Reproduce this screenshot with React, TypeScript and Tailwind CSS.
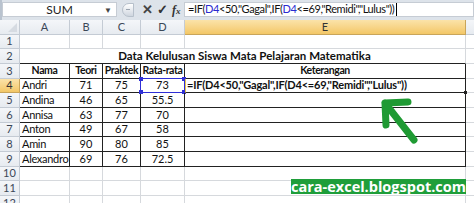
import React from 'react';

const cols = ['A', 'B', 'C', 'D', 'E'];

const rows: (string | number)[][] = [
  ['Andri', 71, 75, 73],
  ['Andina', 46, 65, 55.5],
  ['Annisa', 63, 77, 70],
  ['Anton', 49, 67, 58],
  ['Amin', 90, 80, 85],
  ['Alexandro', 69, 76, 72.5],
];

const formula = (
  <>
    =IF(<span className="text-[#2b2bd0]">D4</span>&lt;50,"Gagal",IF(
    <span className="text-[#2b2bd0]">D4</span>&lt;=69,"Remidi","Lulus"))
  </>
);

const cellFormula = <>=IF(D4&lt;50,"Gagal",IF(D4&lt;=69,"Remidi","Lulus"))</>;

const grid = 'border-r border-b border-[#d6d9dd]';
const dark = 'border-r border-b border-[#222]';

function RowHead({ n, active }: { n: number; active?: boolean }) {
  return (
    <div
      className={`flex items-center justify-center border-r border-b text-[11px] ${
        active
          ? 'bg-gradient-to-b from-[#fbe3a9] to-[#f3c766] border-[#c9a55a] text-[#333]'
          : 'bg-gradient-to-b from-[#f4f6f9] to-[#e7ebf0] border-[#c4cbd4] text-[#3b4757]'
      }`}
    >
      {n}
    </div>
  );
}

export default function App() {
  return (
    <div className="w-[474px] h-[203px] overflow-hidden bg-white relative" style={{ fontFamily: 'Lato, "Liberation Sans", sans-serif' }}>
      {/* formula bar */}
      <div className="flex h-[20px] bg-[#dde3ea] pt-[2px] pb-[3px] border-l-2 border-[#b9c3cf]">
        <div className="w-[115px] bg-white flex items-center border border-[#c6ccd4] text-[12px] text-[#222]">
          <span className="flex-1 text-center pl-[12px]">SUM</span>
          <span className="text-[8px] pr-[4px] text-[#444]">▼</span>
        </div>
        <div className="w-[67px] flex items-center text-[#333]">
          <div className="w-[12px] h-[14px] ml-[5px] rounded-l-full bg-gradient-to-b from-[#ffffff] to-[#cfd6df] border border-[#b7c0cb] flex items-center justify-center">
            <span className="block w-[4px] h-[1px] bg-[#9aa4b0]" />
          </div>
          <span className="ml-[8px] text-[13px] font-bold leading-none text-[#444]">✕</span>
          <span className="ml-[4px] text-[13px] font-bold leading-none text-[#333]">✓</span>
          <span className="ml-[4px] text-[12px] italic font-bold leading-none text-[#333]" style={{ fontFamily: '"Liberation Serif", serif' }}>
            f<span className="text-[9px]">x</span>
          </span>
        </div>
        <div className="flex-1 bg-white border border-[#c6ccd4] flex items-center pl-[3px] text-[11px] tracking-[-0.4px] text-[#111] whitespace-nowrap">
          {formula}
          <span className="inline-block w-[1px] h-[13px] bg-black ml-[2px]" />
        </div>
      </div>

      {/* sheet */}
      <div className="grid grid-cols-[20px_50px_33px_38px_44px_281px_8px] grid-rows-[15px_14px_15px_15px_14px_15px_15px_14px_15px_15px_14px_15px_15px] text-[11px] text-[#111]">
        {/* header row */}
        <div className="relative bg-gradient-to-b from-[#f4f6f9] to-[#e7ebf0] border-r border-b border-[#c4cbd4]">
          <span className="absolute right-[2px] bottom-[2px] w-0 h-0 border-l-[9px] border-l-transparent border-b-[9px] border-b-[#d6dbe2]" />
        </div>
        {cols.map(c => (
          <div
            key={c}
            className={`flex items-center justify-center border-r border-b text-[11px] ${
              c === 'E'
                ? 'bg-gradient-to-b from-[#fbe3a9] to-[#f3c766] border-[#c9a55a] text-[#333]'
                : 'bg-gradient-to-b from-[#f4f6f9] to-[#e7ebf0] border-[#c4cbd4] text-[#3b4757]'
            }`}
          >
            {c}
          </div>
        ))}
        <div className="bg-gradient-to-b from-[#f4f6f9] to-[#e7ebf0] border-b border-[#c4cbd4]" />

        {/* row 1 */}
        <RowHead n={1} />
        {cols.map(c => (
          <div key={c} className={grid} />
        ))}
        <div className="border-b border-[#d6d9dd]" />

        {/* row 2 */}
        <RowHead n={2} />
        <div className="col-span-5 flex items-center justify-center font-bold text-[11.5px] border-b border-r border-b-[#222] border-r-[#d6d9dd] pl-[4px]">
          Data Kelulusan Siswa Mata Pelajaran Matematika
        </div>
        <div className="border-b border-[#d6d9dd]" />

        {/* row 3 */}
        <RowHead n={3} />
        {['Nama', 'Teori', 'Praktek', 'Rata-rata', 'Keterangan'].map(h => (
          <div key={h} className={`${dark} flex items-center justify-center font-bold text-[10.5px] tracking-[-0.4px] whitespace-nowrap`}>
            {h}
          </div>
        ))}
        <div className="border-b border-[#d6d9dd]" />

        {/* data rows */}
        {rows.map((r, i) => (
          <React.Fragment key={i}>
            <RowHead n={i + 4} active={i === 0} />
            <div className={`${dark} flex items-center pl-[2px] tracking-[-0.3px] whitespace-nowrap`}>{r[0]}</div>
            <div className={`${dark} flex items-center justify-center`}>{r[1]}</div>
            <div className={`${dark} flex items-center justify-center`}>{r[2]}</div>
            <div className={`${dark} relative flex items-center justify-center`}>
              {r[3]}
              {i === 0 && (
                <span className="absolute inset-[-1px] border border-[#2f2fd6]">
                  <span className="absolute -left-[2px] -top-[2px] w-[4px] h-[4px] bg-[#2f2fd6]" />
                  <span className="absolute -right-[2px] -top-[2px] w-[4px] h-[4px] bg-[#2f2fd6]" />
                  <span className="absolute -left-[2px] -bottom-[2px] w-[4px] h-[4px] bg-[#2f2fd6]" />
                  <span className="absolute -right-[2px] -bottom-[2px] w-[4px] h-[4px] bg-[#2f2fd6]" />
                </span>
              )}
            </div>
            <div className={`${dark} relative flex items-center pl-[1px] whitespace-nowrap ${i === 0 ? 'font-bold tracking-[-0.2px] border-l border-l-[#e8c64a]' : ''}`}>
              {i === 0 && cellFormula}
              {i === 0 && <span className="absolute -right-[2px] -bottom-[2px] w-[3px] h-[3px] bg-[#222]" />}
            </div>
            <div className="border-b border-[#d6d9dd]" />
          </React.Fragment>
        ))}

        {/* empty rows */}
        {[10, 11, 12].map(n => (
          <React.Fragment key={n}>
            <RowHead n={n} />
            {cols.map(c => (
              <div key={c} className={grid} />
            ))}
            <div className="border-b border-[#d6d9dd]" />
          </React.Fragment>
        ))}
      </div>

      {/* green arrow */}
      <svg className="absolute left-[375px] top-[92px]" width="50" height="56" viewBox="0 0 50 56">
        <path
          d="M39 48 L10 11 M10 11 L33 10 M10 11 L11 33"
          fill="none"
          stroke="#1f9a33"
          strokeWidth="7"
          strokeLinecap="round"
          strokeLinejoin="round"
        />
      </svg>

      {/* watermark */}
      <div className="absolute left-[291px] top-[179px] h-[15px] w-[175px] bg-[#1f9e3a] text-white font-bold text-[14.5px] leading-[15px] flex items-center justify-center" style={{ fontFamily: '"Open Sans", sans-serif' }}>
        cara-excel.blogspot.com
      </div>
    </div>
  );
}
